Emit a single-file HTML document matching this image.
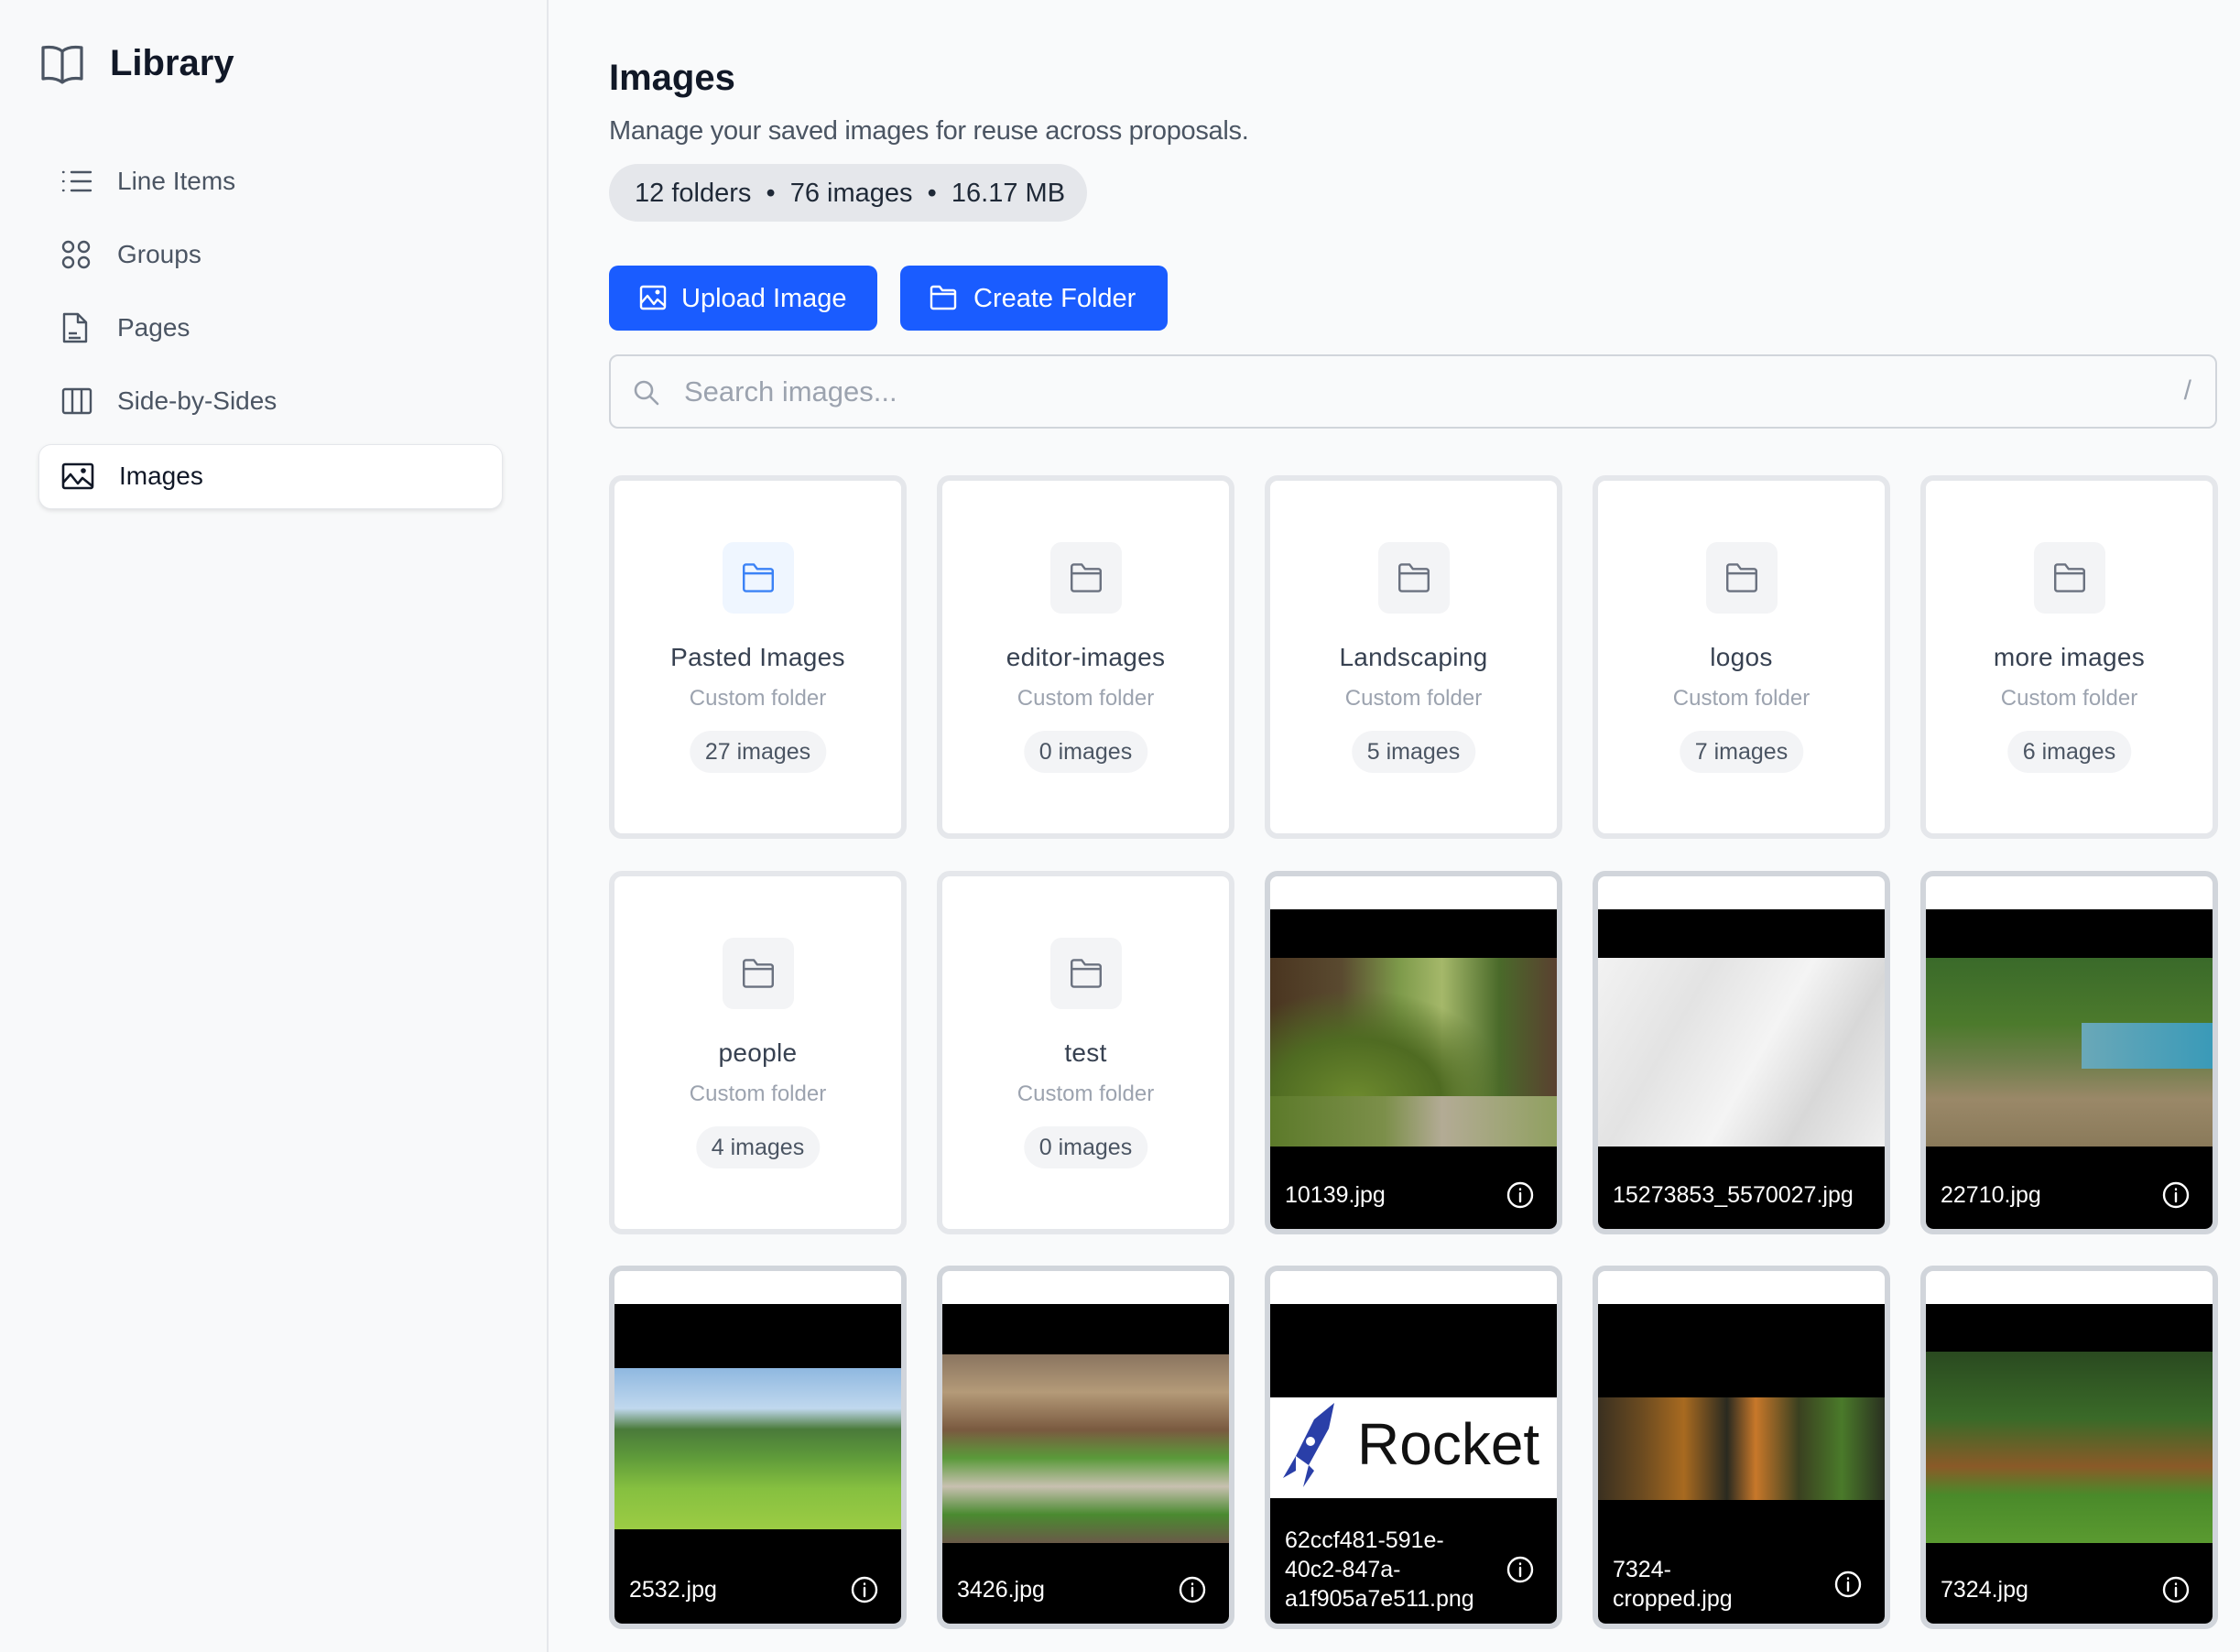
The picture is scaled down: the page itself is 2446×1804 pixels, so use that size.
<!DOCTYPE html>
<html><head><meta charset="utf-8"><style>
*{box-sizing:border-box;margin:0;padding:0}
body{width:2446px;height:1804px;overflow:hidden;background:#f9fafb;font-family:"Liberation Sans",sans-serif;position:relative;color:#111827}
.side{position:absolute;left:0;top:0;width:599px;height:1804px;background:#f8f9fa;border-right:2px solid #e5e7eb}
.abs{position:absolute}
.nav{position:absolute;left:0;width:599px;height:60px;display:flex;align-items:center}
.nav svg{position:absolute;left:67px}
.nav span{position:absolute;left:128px;font-size:28px;color:#4b5563}
.card{position:absolute;width:325px;height:397px;border:6px solid #e5e7eb;border-radius:14px;background:#fff;overflow:hidden}
.card.img{border-color:#d1d5db}
.fi{position:absolute;left:118px;top:67px;width:78px;height:78px;border-radius:12px;background:#f3f4f6;display:flex;align-items:center;justify-content:center}
.nm{position:absolute;left:0;right:0;top:177px;text-align:center;font-size:28px;color:#374151;letter-spacing:.3px}
.cf{position:absolute;left:0;right:0;top:224px;text-align:center;font-size:24px;color:#9ca3af}
.pill{position:absolute;top:273px;left:50%;transform:translateX(-50%);height:46px;padding:0 17px;border-radius:23px;background:#f3f4f6;font-size:25px;color:#4b5563;line-height:46px;white-space:nowrap}
.blk{position:absolute;left:0;right:0;top:36px;bottom:0;background:#000;border-radius:0 0 8px 8px}
.ph{position:absolute;left:0;right:0}
.cap{position:absolute;left:16px;color:#fff;font-size:25px;line-height:32px}
.info{position:absolute;right:24px;width:32px;height:32px}
</style></head><body>
<div class="side">
<svg class="abs" style="left:44px;top:48px" width="48" height="44" viewBox="0 0 24 22" fill="none" stroke="#4b5563" stroke-width="1.6" stroke-linejoin="round"><path d="M12 4C9 1.5 5 1.5 1.5 2v17c3.5-.5 7.5-.3 10.5 2 3-2.3 7-2.5 10.5-2V2C19 1.5 15 1.5 12 4z"/><path d="M12 4v17"/></svg>
<div class="abs" style="left:120px;top:47px;font-size:40px;font-weight:bold;color:#111827">Library</div>
<div class="nav" style="top:168px"><svg width="34" height="26" viewBox="0 0 34 26" fill="none" stroke="#4b5563" stroke-width="2.4" stroke-linecap="round"><path d="M2 3h.5M2 13h.5M2 23h.5M11 3h21M11 13h21M11 23h21"/></svg><span>Line Items</span></div>
<div class="nav" style="top:248px"><svg width="32" height="32" viewBox="0 0 32 32" fill="none" stroke="#4b5563" stroke-width="2.4"><circle cx="7.5" cy="7.5" r="5.5"/><circle cx="24.5" cy="7.5" r="5.5"/><circle cx="7.5" cy="24.5" r="5.5"/><circle cx="24.5" cy="24.5" r="5.5"/></svg><span>Groups</span></div>
<div class="nav" style="top:328px"><svg width="30" height="36" viewBox="0 0 30 36" fill="none" stroke="#4b5563" stroke-width="2.4" stroke-linejoin="round"><path d="M3 3h15l9 9v21H3z"/><path d="M18 3v9h9M8 24h9M8 29h13"/></svg><span>Pages</span></div>
<div class="nav" style="top:408px"><svg width="34" height="30" viewBox="0 0 34 30" fill="none" stroke="#4b5563" stroke-width="2.4"><rect x="2" y="2" width="30" height="26" rx="2"/><path d="M12 2v26M22 2v26"/></svg><span>Side-by-Sides</span></div>
<div class="abs" style="left:42px;top:485px;width:507px;height:71px;background:#fff;border:1.5px solid #e5e7eb;border-radius:14px;box-shadow:0 2px 5px rgba(0,0,0,.1)"></div>
<div class="nav" style="top:490px"><svg width="36" height="30" viewBox="0 0 36 30" fill="none" stroke="#111827" stroke-width="2.6" stroke-linejoin="round"><rect x="2" y="2" width="32" height="26" rx="2"/><path d="M2 22l8-9 8 10 5-6 11 9"/><circle cx="24" cy="9" r="1.5" fill="#111827"/></svg><span style="color:#111827;left:130px">Images</span></div>
</div>

<div class="abs" style="left:665px;top:63px;font-size:40px;font-weight:bold;color:#111827">Images</div>
<div class="abs" style="left:665px;top:127px;font-size:29px;color:#4b5563;letter-spacing:-.3px">Manage your saved images for reuse across proposals.</div>
<div class="abs" style="left:665px;top:179px;width:522px;height:63px;border-radius:32px;background:#e5e7eb;font-size:29px;color:#1f2937;line-height:65px;padding-left:28px;white-space:nowrap">12 folders &nbsp;•&nbsp; 76 images &nbsp;•&nbsp; 16.17 MB</div>

<div class="abs" style="left:665px;top:290px;width:293px;height:71px;background:#1a5cff;border-radius:10px;color:#fff;font-size:29px;line-height:73px">
<svg class="abs" style="left:33px;top:21px" width="30" height="28" viewBox="0 0 30 28" fill="none" stroke="#fff" stroke-width="2.4" stroke-linejoin="round"><rect x="2" y="2" width="26" height="24" rx="2"/><path d="M2 20l7-8 7 9 4-5 8 7"/><circle cx="20" cy="8" r="1.3" fill="#fff"/></svg><span class="abs" style="left:79px">Upload Image</span></div>
<div class="abs" style="left:983px;top:290px;width:292px;height:71px;background:#1a5cff;border-radius:10px;color:#fff;font-size:29px;line-height:73px">
<svg class="abs" style="left:32px;top:21px" width="30" height="28" viewBox="0 0 30 28" fill="none" stroke="#fff" stroke-width="2.4" stroke-linejoin="round"><path d="M2 4a2 2 0 012-2h7l3 4h12a2 2 0 012 2v16a2 2 0 01-2 2H4a2 2 0 01-2-2z"/><path d="M2 10h26"/></svg><span class="abs" style="left:80px">Create Folder</span></div>

<div class="abs" style="left:665px;top:387px;width:1756px;height:81px;border:2px solid #d1d5db;border-radius:10px;background:#f9fafb">
<svg class="abs" style="left:24px;top:25px" width="30" height="30" viewBox="0 0 30 30" fill="none" stroke="#9ca3af" stroke-width="2.6" stroke-linecap="round"><circle cx="12" cy="12" r="9"/><path d="M19 19l8 8"/></svg>
<span class="abs" style="left:80px;top:21px;font-size:31px;color:#9ca3af">Search images...</span>
<span class="abs" style="right:26px;top:21px;font-size:30px;color:#9ca3af">/</span></div>

<!-- row 1 -->
<div class="card" style="left:665px;top:519px"><div class="fi" style="background:#eff6ff"><svg width="38" height="34" viewBox="0 0 30 28" fill="none" stroke="#3b82f6" stroke-width="2" stroke-linejoin="round"><path d="M2 4a2 2 0 012-2h7l3 4h12a2 2 0 012 2v16a2 2 0 01-2 2H4a2 2 0 01-2-2z"/><path d="M2 10h26"/></svg></div><div class="nm">Pasted Images</div><div class="cf">Custom folder</div><div class="pill">27 images</div></div>
<div class="card" style="left:1023px;top:519px"><div class="fi"><svg width="38" height="34" viewBox="0 0 30 28" fill="none" stroke="#6b7280" stroke-width="2" stroke-linejoin="round"><path d="M2 4a2 2 0 012-2h7l3 4h12a2 2 0 012 2v16a2 2 0 01-2 2H4a2 2 0 01-2-2z"/><path d="M2 10h26"/></svg></div><div class="nm">editor-images</div><div class="cf">Custom folder</div><div class="pill">0 images</div></div>
<div class="card" style="left:1381px;top:519px"><div class="fi"><svg width="38" height="34" viewBox="0 0 30 28" fill="none" stroke="#6b7280" stroke-width="2" stroke-linejoin="round"><path d="M2 4a2 2 0 012-2h7l3 4h12a2 2 0 012 2v16a2 2 0 01-2 2H4a2 2 0 01-2-2z"/><path d="M2 10h26"/></svg></div><div class="nm">Landscaping</div><div class="cf">Custom folder</div><div class="pill">5 images</div></div>
<div class="card" style="left:1739px;top:519px"><div class="fi"><svg width="38" height="34" viewBox="0 0 30 28" fill="none" stroke="#6b7280" stroke-width="2" stroke-linejoin="round"><path d="M2 4a2 2 0 012-2h7l3 4h12a2 2 0 012 2v16a2 2 0 01-2 2H4a2 2 0 01-2-2z"/><path d="M2 10h26"/></svg></div><div class="nm">logos</div><div class="cf">Custom folder</div><div class="pill">7 images</div></div>
<div class="card" style="left:2097px;top:519px"><div class="fi"><svg width="38" height="34" viewBox="0 0 30 28" fill="none" stroke="#6b7280" stroke-width="2" stroke-linejoin="round"><path d="M2 4a2 2 0 012-2h7l3 4h12a2 2 0 012 2v16a2 2 0 01-2 2H4a2 2 0 01-2-2z"/><path d="M2 10h26"/></svg></div><div class="nm">more images</div><div class="cf">Custom folder</div><div class="pill">6 images</div></div>

<!-- row 2 -->
<div class="card" style="left:665px;top:951px"><div class="fi"><svg width="38" height="34" viewBox="0 0 30 28" fill="none" stroke="#6b7280" stroke-width="2" stroke-linejoin="round"><path d="M2 4a2 2 0 012-2h7l3 4h12a2 2 0 012 2v16a2 2 0 01-2 2H4a2 2 0 01-2-2z"/><path d="M2 10h26"/></svg></div><div class="nm">people</div><div class="cf">Custom folder</div><div class="pill">4 images</div></div>
<div class="card" style="left:1023px;top:951px"><div class="fi"><svg width="38" height="34" viewBox="0 0 30 28" fill="none" stroke="#6b7280" stroke-width="2" stroke-linejoin="round"><path d="M2 4a2 2 0 012-2h7l3 4h12a2 2 0 012 2v16a2 2 0 01-2 2H4a2 2 0 01-2-2z"/><path d="M2 10h26"/></svg></div><div class="nm">test</div><div class="cf">Custom folder</div><div class="pill">0 images</div></div>

<div class="card img" style="left:1381px;top:951px"><div class="blk"></div>
<div class="ph" style="top:89px;height:206px;background:radial-gradient(ellipse at 30% 75%,#6d8a2e 0,#4f6b22 30%,transparent 55%),linear-gradient(90deg,#4a3520 0,#5a4a30 25%,#7d9a4a 45%,#a5b86a 60%,#4a6a2a 80%,#5a4030 100%)"></div>
<div class="ph" style="top:240px;height:55px;background:linear-gradient(90deg,#5c7a2a,#7c8f4a 40%,#b3ab95 60%,#90a060)"></div>
<div class="cap" style="top:332px">10139.jpg</div><svg class="info" style="top:332px" viewBox="0 0 32 32" fill="none" stroke="#fff" stroke-width="2.4"><circle cx="16" cy="16" r="13"/><path d="M16 14v9M16 9.5v.5" stroke-linecap="round"/></svg></div>

<div class="card img" style="left:1739px;top:951px"><div class="blk"></div>
<div class="ph" style="top:89px;height:206px;background:linear-gradient(120deg,#f2f2f2 0,#e3e3e3 30%,#f4f4f4 55%,#d8d8d8 75%,#efefef 100%)"></div>
<div class="cap" style="top:332px">15273853_5570027.jpg</div></div>

<div class="card img" style="left:2097px;top:951px"><div class="blk"></div>
<div class="ph" style="top:89px;height:206px;background:linear-gradient(180deg,#3a6a2a 0,#4c7a2c 35%,#6e7e4a 55%,#9a8868 75%,#8a7a5a 100%)"></div>
<div class="ph" style="top:160px;height:50px;left:170px;background:linear-gradient(90deg,#6aa8b8,#3a9ab8)"></div>
<div class="cap" style="top:332px">22710.jpg</div><svg class="info" style="top:332px" viewBox="0 0 32 32" fill="none" stroke="#fff" stroke-width="2.4"><circle cx="16" cy="16" r="13"/><path d="M16 14v9M16 9.5v.5" stroke-linecap="round"/></svg></div>

<!-- row 3 -->
<div class="card img" style="left:665px;top:1382px"><div class="blk"></div>
<div class="ph" style="top:106px;height:176px;background:linear-gradient(180deg,#8fb8e0 0,#c0d8ee 25%,#4a7a3a 38%,#5e9a3a 55%,#86c040 75%,#9ccc44 100%)"></div>
<div class="cap" style="top:332px">2532.jpg</div><svg class="info" style="top:332px" viewBox="0 0 32 32" fill="none" stroke="#fff" stroke-width="2.4"><circle cx="16" cy="16" r="13"/><path d="M16 14v9M16 9.5v.5" stroke-linecap="round"/></svg></div>

<div class="card img" style="left:1023px;top:1382px"><div class="blk"></div>
<div class="ph" style="top:91px;height:206px;background:linear-gradient(180deg,#8a7560 0,#b49a78 20%,#7a5a40 40%,#5a9a3a 55%,#c8c0b0 70%,#4a8a30 85%,#6a5a48 100%)"></div>
<div class="cap" style="top:332px">3426.jpg</div><svg class="info" style="top:332px" viewBox="0 0 32 32" fill="none" stroke="#fff" stroke-width="2.4"><circle cx="16" cy="16" r="13"/><path d="M16 14v9M16 9.5v.5" stroke-linecap="round"/></svg></div>

<div class="card img" style="left:1381px;top:1382px"><div class="blk"></div>
<div class="ph" style="top:138px;height:110px;background:#fff">
<svg class="abs" style="left:8px;top:4px" width="70" height="100" viewBox="0 0 70 100"><path d="M62 2L40 20 20 60l14 10 22-40z" fill="#2a3fa8"/><path d="M20 60L6 84l14-8M34 70l-6 24 12-18" fill="#2a3fa8"/><circle cx="36" cy="44" r="5" fill="#fff"/></svg>
<span class="abs" style="left:95px;top:14px;font-size:64px;color:#111">Rocket</span></div>
<div class="cap" style="top:278px">62ccf481-591e-<br>40c2-847a-<br>a1f905a7e511.png</div><svg class="info" style="top:310px" viewBox="0 0 32 32" fill="none" stroke="#fff" stroke-width="2.4"><circle cx="16" cy="16" r="13"/><path d="M16 14v9M16 9.5v.5" stroke-linecap="round"/></svg></div>

<div class="card img" style="left:1739px;top:1382px"><div class="blk"></div>
<div class="ph" style="top:138px;height:112px;background:linear-gradient(90deg,#3a3020 0,#6a4a20 15%,#a86a20 30%,#2a2a20 45%,#c8782a 55%,#3a4020 70%,#4a7a2a 85%,#2a3020 100%)"></div>
<div class="cap" style="top:310px">7324-<br>cropped.jpg</div><svg class="info" style="top:326px" viewBox="0 0 32 32" fill="none" stroke="#fff" stroke-width="2.4"><circle cx="16" cy="16" r="13"/><path d="M16 14v9M16 9.5v.5" stroke-linecap="round"/></svg></div>

<div class="card img" style="left:2097px;top:1382px"><div class="blk"></div>
<div class="ph" style="top:88px;height:209px;background:linear-gradient(180deg,#2a4a20 0,#3a6a28 35%,#8a5a28 60%,#4a8a2a 75%,#5a9a30 100%)"></div>
<div class="cap" style="top:332px">7324.jpg</div><svg class="info" style="top:332px" viewBox="0 0 32 32" fill="none" stroke="#fff" stroke-width="2.4"><circle cx="16" cy="16" r="13"/><path d="M16 14v9M16 9.5v.5" stroke-linecap="round"/></svg></div>
</body></html>
